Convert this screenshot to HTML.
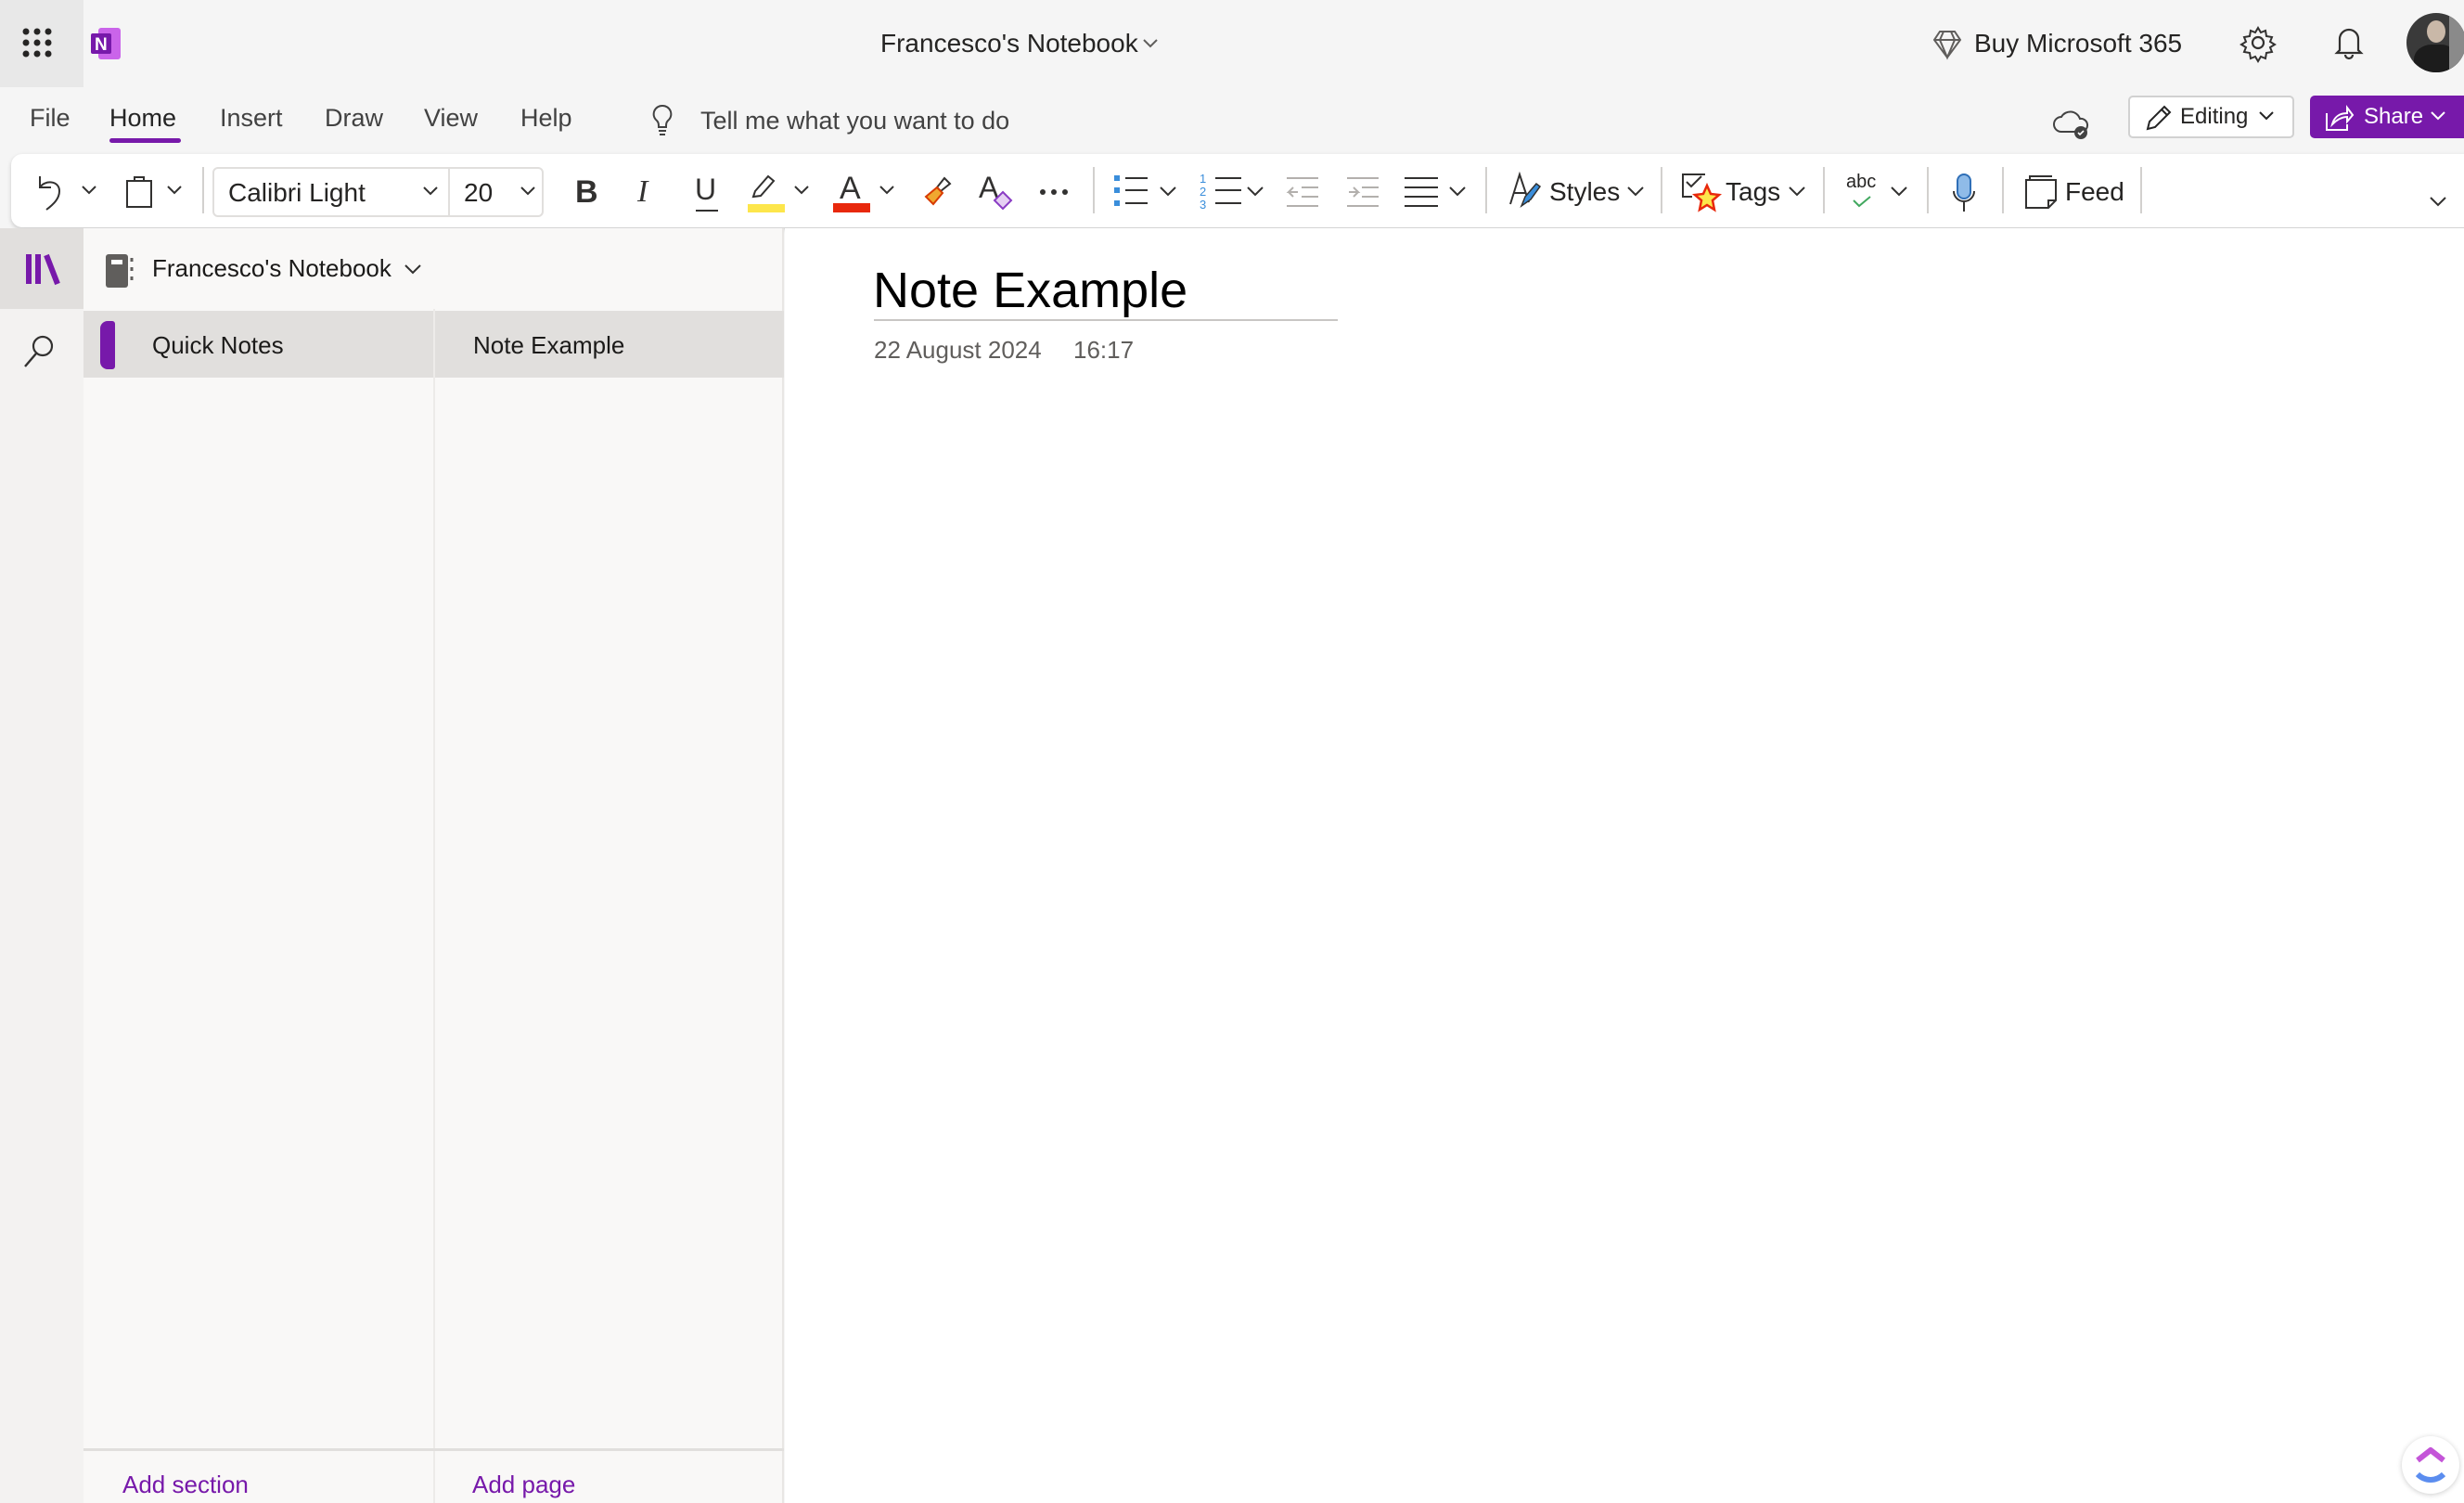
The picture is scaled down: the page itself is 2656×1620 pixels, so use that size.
<!DOCTYPE html>
<html><head><meta charset="utf-8"><style>
*{margin:0;padding:0;box-sizing:border-box}
body{width:2656px;height:1620px;overflow:hidden;background:#f5f5f5;font-family:"Liberation Sans",sans-serif;color:#252423;position:relative}
.a{position:absolute}
.t{position:absolute;white-space:nowrap;line-height:1}
.sep{position:absolute;top:180px;width:2px;height:50px;background:#d2d0ce}
svg{position:absolute;overflow:visible}
</style></head><body>
<div class="a" style="left:0;top:0;width:90px;height:94px;background:#e8e8e8"></div>
<svg style="left:24px;top:30px" width="34" height="34"><g fill="#252423"><circle cx="4" cy="4" r="3.5"/><circle cx="16" cy="4" r="3.5"/><circle cx="28" cy="4" r="3.5"/><circle cx="4" cy="16" r="3.5"/><circle cx="16" cy="16" r="3.5"/><circle cx="28" cy="16" r="3.5"/><circle cx="4" cy="28" r="3.5"/><circle cx="16" cy="28" r="3.5"/><circle cx="28" cy="28" r="3.5"/></g></svg>
<svg style="left:98px;top:30px" width="34" height="34"><rect x="8" y="0" width="24" height="34" rx="3" fill="#ca64ea"/><rect x="0" y="6" width="22" height="22" rx="2" fill="#7719aa"/><text x="4" y="24" fill="#fff" font-size="19" font-weight="bold" font-family="Liberation Sans">N</text></svg>
<div class="t" style="left:949px;top:33px;font-size:28px">Francesco's Notebook</div>
<svg style="left:1232px;top:42px" width="16" height="10"><path d="M1 1l7 7 7-7" stroke="#605e5c" stroke-width="2" fill="none"/></svg>
<svg style="left:2084px;top:32px" width="30" height="32"><path d="M7 2h16l6 9-14 19L1 11z M1 11h28 M11 2l-4 9 8 19 8-19-4-9" stroke="#605e5c" stroke-width="2" fill="none"/></svg>
<div class="t" style="left:2128px;top:33px;font-size:28px">Buy Microsoft 365</div>
<svg style="left:2416px;top:28px" width="36" height="36"><circle cx="18" cy="18" r="6" stroke="#323130" stroke-width="2.2" fill="none"/><path d="M18 2l3 5 5-2 1 6 6 1-2 5 5 3-5 3 2 5-6 1-1 6-5-2-3 5-3-5-5 2-1-6-6-1 2-5-5-3 5-3-2-5 6-1 1-6 5 2z" stroke="#323130" stroke-width="2" fill="none"/></svg>
<svg style="left:2518px;top:28px" width="28" height="36"><path d="M4 26V14a10 10 0 0120 0v12l3 3H1z M10 31a4 4 0 008 0" stroke="#323130" stroke-width="2.2" fill="none"/></svg>
<div class="a" style="left:2594px;top:14px;width:64px;height:64px;border-radius:50%;overflow:hidden;background:#3a3a3a">
<div class="a" style="left:22px;top:8px;width:20px;height:24px;border-radius:50%;background:#c9b8a8"></div>
<div class="a" style="left:8px;top:34px;width:48px;height:40px;border-radius:40% 40% 0 0;background:#1c1c1c"></div>
<div class="a" style="left:46px;top:0;width:18px;height:64px;background:#8a8a8a"></div>
</div>
<div class="t" style="left:32px;top:114px;font-size:27px;color:#424242">File</div>
<div class="t" style="left:118px;top:114px;font-size:27px;color:#242424">Home</div>
<div class="a" style="left:118px;top:149px;width:77px;height:5px;border-radius:3px;background:#7719aa"></div>
<div class="t" style="left:237px;top:114px;font-size:27px;color:#424242">Insert</div>
<div class="t" style="left:350px;top:114px;font-size:27px;color:#424242">Draw</div>
<div class="t" style="left:457px;top:114px;font-size:27px;color:#424242">View</div>
<div class="t" style="left:561px;top:114px;font-size:27px;color:#424242">Help</div>
<svg style="left:702px;top:112px" width="24" height="36"><path d="M12 2a9 9 0 00-6 16c2 2 2 4 2 7h8c0-3 0-5 2-7a9 9 0 00-6-16z M8 29h8 M9 33h6" stroke="#424242" stroke-width="2" fill="none"/></svg>
<div class="t" style="left:755px;top:117px;font-size:27px;color:#424242">Tell me what you want to do</div>
<svg style="left:2212px;top:116px" width="40" height="34"><path d="M10 26a8 8 0 010-16 11 11 0 0120 2 7 7 0 012 14z" stroke="#424242" stroke-width="2" fill="#f5f5f5"/><circle cx="31" cy="27" r="7" fill="#424242"/><path d="M28 27l2 2 4-4" stroke="#fff" stroke-width="1.6" fill="none"/></svg>
<div class="a" style="left:2294px;top:103px;width:179px;height:46px;border:2px solid #d1d1d1;border-radius:5px;background:#fff"></div>
<svg style="left:2312px;top:112px" width="30" height="30"><path d="M3 27l2-8L21 3l6 6-16 16z M18 6l6 6" stroke="#242424" stroke-width="2" fill="none"/></svg>
<div class="t" style="left:2350px;top:114px;font-size:24px">Editing</div>
<svg style="left:2435px;top:120px" width="16" height="10"><path d="M1 1l7 7 7-7" stroke="#242424" stroke-width="2" fill="none"/></svg>
<div class="a" style="left:2490px;top:103px;width:166px;height:46px;border-radius:5px 0 0 5px;background:#7719aa"></div>
<svg style="left:2506px;top:112px" width="30" height="30"><path d="M2 10v18h22v-6 M8 22c2-8 8-12 16-12V4l6 8-6 7v-5c-6 0-11 3-16 8z" stroke="#fff" stroke-width="2" fill="none"/></svg>
<div class="t" style="left:2548px;top:114px;font-size:24px;color:#fff">Share</div>
<svg style="left:2620px;top:120px" width="16" height="10"><path d="M1 1l7 7 7-7" stroke="#fff" stroke-width="2" fill="none"/></svg>
<div class="a" style="left:12px;top:166px;width:2660px;height:79px;background:#fff;border-radius:12px;box-shadow:0 2px 5px rgba(0,0,0,.18)"></div>
<svg style="left:40px;top:188px" width="28" height="40"><path d="M3 2v12h12 M3 14C8 6 24 6 24 18c0 8-6 14-14 20" stroke="#323130" stroke-width="2" fill="none"/></svg>
<svg style="left:88px;top:200px" width="16" height="10"><path d="M1 1l7 7 7-7" stroke="#323130" stroke-width="2" fill="none"/></svg>
<svg style="left:135px;top:189px" width="30" height="36"><path d="M2 6h26v28H2z M10 6V2h10v4z" stroke="#323130" stroke-width="2" fill="none"/></svg>
<svg style="left:180px;top:200px" width="16" height="10"><path d="M1 1l7 7 7-7" stroke="#323130" stroke-width="2" fill="none"/></svg>
<div class="sep" style="left:218px"></div>
<div class="a" style="left:229px;top:180px;width:357px;height:54px;border:2px solid #e1dfdd;border-radius:6px"></div>
<div class="a" style="left:483px;top:180px;width:2px;height:54px;background:#e1dfdd"></div>
<div class="t" style="left:246px;top:194px;font-size:28px">Calibri Light</div>
<svg style="left:456px;top:201px" width="16" height="10"><path d="M1 1l7 7 7-7" stroke="#323130" stroke-width="2" fill="none"/></svg>
<div class="t" style="left:500px;top:194px;font-size:28px">20</div>
<svg style="left:561px;top:201px" width="16" height="10"><path d="M1 1l7 7 7-7" stroke="#323130" stroke-width="2" fill="none"/></svg>
<div class="t" style="left:620px;top:190px;font-size:34px;font-weight:bold;color:#323130">B</div>
<div class="t" style="left:687px;top:190px;font-size:34px;font-style:italic;font-family:'Liberation Serif',serif;color:#323130">I</div>
<div class="t" style="left:749px;top:188px;font-size:32px;color:#323130">U</div>
<div class="a" style="left:750px;top:226px;width:24px;height:2px;background:#323130"></div>
<svg style="left:808px;top:188px" width="30" height="28"><path d="M4 24l2-6L20 2l6 5-14 16z" stroke="#323130" stroke-width="2" fill="none"/></svg>
<div class="a" style="left:806px;top:220px;width:40px;height:9px;background:#fde64b"></div>
<svg style="left:856px;top:200px" width="16" height="10"><path d="M1 1l7 7 7-7" stroke="#323130" stroke-width="2" fill="none"/></svg>
<div class="t" style="left:905px;top:186px;font-size:34px;color:#323130">A</div>
<div class="a" style="left:898px;top:219px;width:40px;height:10px;background:#e8280c"></div>
<svg style="left:948px;top:200px" width="16" height="10"><path d="M1 1l7 7 7-7" stroke="#323130" stroke-width="2" fill="none"/></svg>
<svg style="left:994px;top:190px" width="34" height="34"><path d="M24 2l6 6-10 8-4-4z" stroke="#323130" stroke-width="2" fill="none"/><path d="M4 22l12-10 6 6-10 12z" fill="#f0a830" stroke="#d83b01" stroke-width="2"/></svg>
<div class="t" style="left:1055px;top:186px;font-size:32px;color:#323130">A</div>
<svg style="left:1070px;top:205px" width="22" height="22"><path d="M11 2l9 9-9 9-9-9z" stroke="#8a3cc4" stroke-width="2" fill="#e6d0f3"/></svg>
<svg style="left:1120px;top:203px" width="34" height="8"><circle cx="4" cy="4" r="3" fill="#323130"/><circle cx="16" cy="4" r="3" fill="#323130"/><circle cx="28" cy="4" r="3" fill="#323130"/></svg>
<div class="sep" style="left:1178px"></div>
<svg style="left:1201px;top:189px" width="40" height="34"><g fill="#3a8edb"><rect x="0" y="0" width="6" height="6"/><rect x="0" y="13" width="6" height="6"/><rect x="0" y="27" width="6" height="6"/></g><path d="M12 3h24M12 16h24M12 30h24" stroke="#323130" stroke-width="2"/></svg>
<svg style="left:1250px;top:201px" width="18" height="10"><path d="M1 1l8 8 8-8" stroke="#323130" stroke-width="2" fill="none"/></svg>
<div class="t" style="left:1293px;top:186px;font-size:13px;line-height:14px;color:#3a8edb;white-space:pre">1
2
3</div>
<svg style="left:1306px;top:189px" width="36" height="34"><path d="M4 3h28M4 16h28M4 30h28" stroke="#323130" stroke-width="2"/></svg>
<svg style="left:1344px;top:201px" width="18" height="10"><path d="M1 1l8 8 8-8" stroke="#323130" stroke-width="2" fill="none"/></svg>
<svg style="left:1387px;top:190px" width="34" height="34"><path d="M0 2h34M16 12h18M16 22h18M0 32h34 M12 17H2l5-5M2 17l5 5" stroke="#b3b0ad" stroke-width="2" fill="none"/></svg>
<svg style="left:1452px;top:190px" width="34" height="34"><path d="M0 2h34M16 12h18M16 22h18M0 32h34 M2 17h10l-5-5M12 17l-5 5" stroke="#b3b0ad" stroke-width="2" fill="none"/></svg>
<svg style="left:1514px;top:190px" width="36" height="34"><path d="M0 2h36M0 12h36M0 22h36M0 32h36" stroke="#323130" stroke-width="2"/></svg>
<svg style="left:1562px;top:201px" width="18" height="10"><path d="M1 1l8 8 8-8" stroke="#323130" stroke-width="2" fill="none"/></svg>
<div class="sep" style="left:1601px"></div>
<svg style="left:1626px;top:186px" width="36" height="40"><path d="M2 34L12 2l10 30 M6 22h12" stroke="#323130" stroke-width="2" fill="none"/><path d="M14 36l4-10 12-14 4 3-10 14z" fill="#3a8edb" stroke="#323130" stroke-width="1.5"/></svg>
<div class="t" style="left:1670px;top:193px;font-size:28px">Styles</div>
<svg style="left:1754px;top:201px" width="18" height="10"><path d="M1 1l8 8 8-8" stroke="#323130" stroke-width="2" fill="none"/></svg>
<div class="sep" style="left:1790px"></div>
<svg style="left:1812px;top:186px" width="42" height="44"><path d="M26 2H2v24h10 M6 10l5 5 11-11" stroke="#323130" stroke-width="2" fill="none"/><path d="M28 14l4 9 9 1-7 6 2 10-8-5-8 5 2-10-7-6 9-1z" fill="#fde64b" stroke="#e8280c" stroke-width="2.5"/></svg>
<div class="t" style="left:1860px;top:193px;font-size:28px">Tags</div>
<svg style="left:1928px;top:201px" width="18" height="10"><path d="M1 1l8 8 8-8" stroke="#323130" stroke-width="2" fill="none"/></svg>
<div class="sep" style="left:1965px"></div>
<div class="t" style="left:1990px;top:186px;font-size:20px">abc</div>
<svg style="left:1996px;top:210px" width="22" height="14"><path d="M2 6l6 6 12-10" stroke="#41a85f" stroke-width="2" fill="none"/></svg>
<svg style="left:2038px;top:201px" width="18" height="10"><path d="M1 1l8 8 8-8" stroke="#323130" stroke-width="2" fill="none"/></svg>
<div class="sep" style="left:2077px"></div>
<svg style="left:2104px;top:186px" width="26" height="44"><rect x="6" y="2" width="14" height="26" rx="7" fill="#8fbbe8" stroke="#2f6fb7" stroke-width="2"/><path d="M2 20a11 11 0 0022 0 M13 31v11" stroke="#323130" stroke-width="2" fill="none"/></svg>
<div class="sep" style="left:2158px"></div>
<svg style="left:2182px;top:188px" width="36" height="38"><path d="M2 6v30h24l8-8V6z M26 36v-8h8 M6 6V2h24" stroke="#323130" stroke-width="2" fill="none"/></svg>
<div class="t" style="left:2226px;top:193px;font-size:28px">Feed</div>
<div class="sep" style="left:2307px"></div>
<svg style="left:2619px;top:212px" width="18" height="10"><path d="M1 1l8 8 8-8" stroke="#323130" stroke-width="2" fill="none"/></svg>
<div class="a" style="left:0;top:246px;width:90px;height:1374px;background:#f3f2f1"></div>
<div class="a" style="left:0;top:246px;width:90px;height:87px;background:#e1dfdd"></div>
<svg style="left:28px;top:272px" width="38" height="36"><path d="M3 2v32M13 2v32M22 3l12 31" stroke="#7719aa" stroke-width="6" fill="none"/></svg>
<svg style="left:24px;top:360px" width="36" height="38"><circle cx="22" cy="13" r="10" stroke="#323130" stroke-width="2.2" fill="none"/><path d="M15 21L3 35" stroke="#323130" stroke-width="2.4"/></svg>
<div class="a" style="left:90px;top:246px;width:755px;height:1374px;background:#f9f8f7;border-right:2px solid #e8e6e4"></div>
<div class="a" style="left:467px;top:333px;width:2px;height:1287px;background:#edebe9"></div>
<svg style="left:112px;top:272px" width="36" height="40"><rect x="2" y="2" width="24" height="36" rx="3" fill="#605e5c"/><rect x="8" y="8" width="12" height="5" fill="#fff"/><path d="M30 6v4M30 16v4M30 26v4" stroke="#605e5c" stroke-width="3"/></svg>
<div class="t" style="left:164px;top:276px;font-size:26px;color:#1b1a19">Francesco's Notebook</div>
<svg style="left:436px;top:285px" width="18" height="10"><path d="M1 1l8 8 8-8" stroke="#323130" stroke-width="2" fill="none"/></svg>
<div class="a" style="left:90px;top:335px;width:755px;height:72px;background:#e1dfdd"></div>
<div class="a" style="left:467px;top:335px;width:2px;height:72px;background:#edebe9"></div>
<div class="a" style="left:108px;top:346px;width:16px;height:52px;background:#7719aa;border-radius:8px 3px 3px 8px"></div>
<div class="t" style="left:164px;top:359px;font-size:26px;color:#1b1a19">Quick Notes</div>
<div class="t" style="left:510px;top:359px;font-size:26px;color:#1b1a19">Note Example</div>
<div class="a" style="left:90px;top:1561px;width:755px;height:3px;background:#e1dfdd"></div>
<div class="t" style="left:132px;top:1587px;font-size:26px;color:#7719aa">Add section</div>
<div class="t" style="left:509px;top:1587px;font-size:26px;color:#7719aa">Add page</div>
<div class="a" style="left:846px;top:246px;width:1810px;height:1374px;background:#fff"></div>
<div class="t" style="left:941px;top:286px;font-size:54px;color:#000">Note Example</div>
<div class="a" style="left:942px;top:344px;width:500px;height:2px;background:#c8c6c4"></div>
<div class="t" style="left:942px;top:364px;font-size:26px;color:#605e5c">22 August 2024</div>
<div class="t" style="left:1157px;top:364px;font-size:26px;color:#605e5c">16:17</div>
<div class="a" style="left:2589px;top:1548px;width:62px;height:62px;border-radius:50%;background:#fff;box-shadow:0 1px 6px rgba(0,0,0,.2)"></div>
<svg style="left:2600px;top:1560px" width="40" height="40"><path d="M6 14L20 3l14 11" stroke="#c455d8" stroke-width="6" fill="none" stroke-linejoin="round"/><path d="M6 29c8 8 20 8 28 0" stroke="#5b8def" stroke-width="6" fill="none"/></svg>
</body></html>
